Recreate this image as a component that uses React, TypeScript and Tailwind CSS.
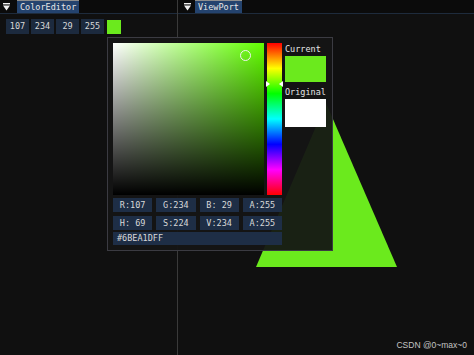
import React from 'react';

const mono = { fontFamily: '"DejaVu Sans Mono", "Liberation Mono", monospace' };

// dock node menu glyph: bar over a down triangle
const DockMenu = () => (
  <svg width="7" height="8" viewBox="0 0 7 8" className="shrink-0">
    <rect x="0" y="0" width="7" height="1.4" fill="#f0f0f0" />
    <polygon points="0,2.6 7,2.6 3.5,7.6" fill="#f0f0f0" />
  </svg>
);

const TitleBar = ({ title, iconMl, tabMl }: { title: string; iconMl: string; tabMl: string }) => (
  <div className="h-[14px] shrink-0 bg-[#0b0b0b] border-b border-[#1e2b3c] flex items-start">
    <div className={`${iconMl} mt-[3px]`}>
      <DockMenu />
    </div>
    <div
      className={`${tabMl} h-[13px] border-t-[1.5px] border-[#8f8f8f] bg-[#24436e] px-[3px] flex items-center text-[8.5px] leading-none text-[#e6e6e6]`}
    >
      {title}
    </div>
  </div>
);

const DragBox = ({ label, w }: { label: string; w: string }) => (
  <div
    className={`${w} h-[15px] bg-[#1c2a3e] flex items-center justify-center text-[8.5px] leading-none text-[#d8d8d8] whitespace-pre`}
  >
    {label}
  </div>
);

const PopupBox = ({ label }: { label: string }) => (
  <div className="flex-1 h-[14px] bg-[#1e2e46] flex items-center justify-center text-[8.5px] leading-none text-[#d8d8d8] whitespace-pre">
    {label}
  </div>
);

const ColorPickerPopup = () => (
  <div
    className="absolute left-[107px] top-[37px] w-[226px] h-[214px] border border-[#3b3b42] bg-[rgba(20,20,20,0.94)] p-[5px] flex gap-[3px]"
    style={mono}
  >
    <div className="w-[169px] flex flex-col">
      <div className="flex">
        {/* saturation / value square */}
        <div className="relative w-[151px] h-[152px] bg-[#62ff00]">
          <div className="absolute inset-0 bg-[linear-gradient(to_right,#ffffff,rgba(255,255,255,0))]" />
          <div className="absolute inset-0 bg-[linear-gradient(to_bottom,rgba(0,0,0,0),#000000)]" />
          <div className="absolute left-[127px] top-[7px] w-[11px] h-[11px] rounded-full border border-[#f2f2f2]" />
        </div>
        {/* hue bar */}
        <div className="relative ml-[3px] w-[15px] h-[152px] bg-[linear-gradient(to_bottom,#ff0000,#ffff00,#00ff00,#00ffff,#0000ff,#ff00ff,#ff0000)]">
          <div className="absolute left-[-1px] top-[38px] w-0 h-0 border-y-[3px] border-y-transparent border-l-[4px] border-l-white" />
          <div className="absolute right-[-1px] top-[38px] w-0 h-0 border-y-[3px] border-y-transparent border-r-[4px] border-r-white" />
        </div>
      </div>
      <div className="mt-[3px] flex gap-[4px]">
        <PopupBox label="R:107" />
        <PopupBox label="G:234" />
        <PopupBox label="B: 29" />
        <PopupBox label="A:255" />
      </div>
      <div className="mt-[4px] flex gap-[4px]">
        <PopupBox label="H: 69" />
        <PopupBox label="S:224" />
        <PopupBox label="V:234" />
        <PopupBox label="A:255" />
      </div>
      <div className="mt-[2px] h-[14px] bg-[#1e2e46] flex items-center px-[4px] text-[8.5px] leading-none text-[#d8d8d8]">
        #6BEA1DFF
      </div>
    </div>
    <div className="w-[41px] flex flex-col">
      <div className="h-[13px] flex items-center text-[8.5px] leading-none text-[#e6e6e6]">Current</div>
      <div className="h-[26px] bg-[#6bea1d]" />
      <div className="mt-[4px] h-[13px] flex items-center text-[8.5px] leading-none text-[#e6e6e6]">Original</div>
      <div className="h-[28px] bg-white" />
    </div>
  </div>
);

export default function App() {
  return (
    <div className="relative w-[474px] h-[355px] overflow-hidden bg-[#101010] flex" style={mono}>
      {/* ColorEditor window */}
      <div className="w-[177px] shrink-0 flex flex-col">
        <TitleBar title="ColorEditor" iconMl="ml-[3px]" tabMl="ml-[7px]" />
        <div className="flex items-center pl-[6px] pt-[5px] gap-[2px]">
          <DragBox label="107" w="w-[23px]" />
          <DragBox label="234" w="w-[23px]" />
          <DragBox label="29" w="w-[23px]" />
          <DragBox label="255" w="w-[23px]" />
          <div className="ml-[1px] w-[14px] h-[14px] bg-[#6bea1d]" />
        </div>
      </div>

      <div className="w-px shrink-0 bg-[#3a3a3a]" />

      {/* ViewPort window */}
      <div className="flex-1 flex flex-col">
        <TitleBar title="ViewPort" iconMl="ml-[6px]" tabMl="ml-[4px]" />
        <div className="relative flex-1">
          <svg className="absolute inset-0" width="296" height="341" viewBox="0 0 296 341">
            <polygon points="148,89 78,253 219,253" fill="#6bea1d" />
          </svg>
          <div
            className="absolute right-[7px] bottom-[6px] text-[8.5px] leading-none text-[#c4c4c4]"
            style={{ fontFamily: '"Liberation Sans", Arial, sans-serif' }}
          >
            CSDN @0~max~0
          </div>
        </div>
      </div>

      <ColorPickerPopup />
    </div>
  );
}
